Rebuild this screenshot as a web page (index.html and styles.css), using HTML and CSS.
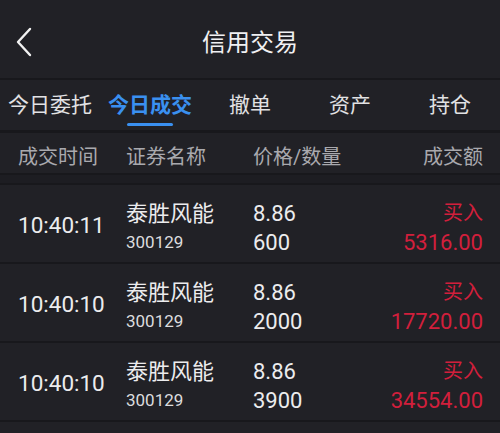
FILE: index.html
```html
<!DOCTYPE html>
<html>
<head>
  <meta charset="utf-8">
  <title>信用交易</title>
  <link rel="stylesheet" href="styles.css">
</head>
<body>

  <div class="topbar">
    <svg class="back" width="20" height="30" viewBox="0 0 20 30">
      <polyline points="15,2 3,15 15,28" fill="none" stroke="#f2f2f2" stroke-width="2.4" stroke-linecap="round" stroke-linejoin="round"/>
    </svg>
    <div class="title">信用交易</div>
  </div>

  <div class="tabs">
    <div class="tab">今日委托</div>
    <div class="tab active">今日成交</div>
    <div class="tab">撤单</div>
    <div class="tab">资产</div>
    <div class="tab">持仓</div>
  </div>

  <div class="thead">
    <div>成交时间</div>
    <div>证券名称</div>
    <div>价格/数量</div>
    <div class="right">成交额</div>
  </div>
  <div class="spacer"></div>

  <div id="list"></div>

  <script>
    const deals = [
      { time: '10:40:11', name: '泰胜风能', code: '300129', price: '8.86', qty: '600', side: '买入', amount: '5316.00' },
      { time: '10:40:10', name: '泰胜风能', code: '300129', price: '8.86', qty: '2000', side: '买入', amount: '17720.00' },
      { time: '10:40:10', name: '泰胜风能', code: '300129', price: '8.86', qty: '3900', side: '买入', amount: '34554.00' }
    ];

    const list = document.getElementById('list');
    deals.forEach(d => {
      const row = document.createElement('div');
      row.className = 'row';
      row.innerHTML =
        '<div class="time">' + d.time + '</div>' +
        '<div class="cell"><div class="name">' + d.name + '</div><div class="code">' + d.code + '</div></div>' +
        '<div class="cell"><div class="num">' + d.price + '</div><div class="num">' + d.qty + '</div></div>' +
        '<div class="cell right buy"><div class="side">' + d.side + '</div><div class="num">' + d.amount + '</div></div>';
      list.appendChild(row);
    });
  </script>

</body>
</html>
```

FILE: styles.css
```css
body {
  margin: 0;
  background-color: #212126;
  color: #ececee;
  font-family: Roboto, "Noto Sans CJK SC", sans-serif;
  width: 500px;
  height: 433px;
  overflow: hidden;
}

.topbar {
  height: 78px;
  display: flex;
  align-items: center;
  justify-content: center;
  position: relative;
  border-bottom: 2px solid #18181c;
}

.back {
  position: absolute;
  left: 15px;
  top: 27px;
}

.title {
  font-size: 24px;
  color: #f0f0f2;
  margin-top: 2px;
}

.tabs {
  height: 50px;
  display: grid;
  grid-template-columns: repeat(5, 100px);
  border-bottom: 3px solid #18181c;
}

.tab {
  display: flex;
  align-items: center;
  justify-content: center;
  font-size: 21px;
  color: #e2e2e4;
  position: relative;
  padding-bottom: 5px;
}

.tab.active {
  color: #3a90f0;
  font-weight: bold;
}

.tab.active::after {
  content: "";
  position: absolute;
  left: 27px;
  right: 27px;
  bottom: 4px;
  height: 3px;
  border-radius: 2px;
  background-color: #3a90f0;
}

.thead,
.row {
  display: grid;
  grid-template-columns: 108px 127px 1fr auto;
  padding: 0 17px 0 18px;
}

.thead {
  height: 42px;
  align-items: center;
  font-size: 20px;
  color: #a9a9ae;
  border-bottom: 2px solid #18181c;
  padding-top: 4px;
  box-sizing: border-box;
}

.spacer {
  height: 8px;
  background-color: #1d1d22;
  border-bottom: 2px solid #18181c;
}

.row {
  height: 79px;
  padding-top: 14px;
  padding-bottom: 6px;
  box-sizing: border-box;
  border-bottom: 2px solid #18181c;
}

.time {
  font-size: 22.5px;
  align-self: center;
  margin-bottom: 6px;
  color: #ececee;
}

.cell > div {
  height: 29px;
  line-height: 29px;
}

.name {
  font-size: 22px;
}

.code {
  font-size: 17px;
  color: #dcdcde;
}

.num {
  font-size: 22px;
}

.right {
  text-align: right;
}

.buy {
  color: #d21f3c;
}

.side {
  font-size: 20px;
}
```
